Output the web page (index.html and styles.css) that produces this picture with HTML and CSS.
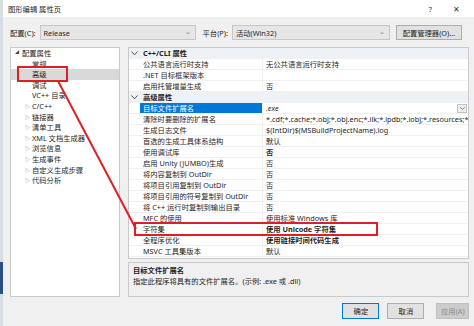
FILE: index.html
```html
<!DOCTYPE html>
<html lang="zh-CN">
<head>
<meta charset="UTF-8">
<title>图形编辑 属性页</title>
<link rel="stylesheet" href="styles.css">
</head>
<body>
<div class="desk">
  <div class="edge edge-left"></div>
  <div class="dialog">
    <div class="titlebar">
      <span class="title">图形编辑 属性页</span>
      <span class="title-btn">?</span>
      <span class="title-btn close">✕</span>
    </div>
    <div class="client">
      <div class="config-row">
        <span class="label">配置(C):</span>
        <div class="combo combo-config"><span>Release</span><span class="caret">⌄</span></div>
        <span class="label">平台(P):</span>
        <div class="combo combo-platform"><span>活动(Win32)</span><span class="caret">⌄</span></div>
        <div class="btn btn-manager">配置管理器(O)...</div>
      </div>

      <div class="main">
        <div class="tree">
          <div class="node root"><span class="exp">◢</span>配置属性</div>
          <div class="node child">常规</div>
          <div class="node child selected">高级</div>
          <div class="node child">调试</div>
          <div class="node child">VC++ 目录</div>
          <div class="node child"><span class="arr">▷</span>C/C++</div>
          <div class="node child"><span class="arr">▷</span>链接器</div>
          <div class="node child"><span class="arr">▷</span>清单工具</div>
          <div class="node child"><span class="arr">▷</span>XML 文档生成器</div>
          <div class="node child"><span class="arr">▷</span>浏览信息</div>
          <div class="node child"><span class="arr">▷</span>生成事件</div>
          <div class="node child"><span class="arr">▷</span>自定义生成步骤</div>
          <div class="node child"><span class="arr">▷</span>代码分析</div>
        </div>

        <div class="right">
          <div class="grid">
            <div class="row cat"><span class="gutter"><svg width="7" height="5" viewBox="0 0 7 5"><path d="M0.5 0.5 L3.5 3.8 L6.5 0.5" fill="none" stroke="#555" stroke-width="1"/></svg></span><span class="name">C++/CLI 属性</span></div>
            <div class="row"><span class="gutter"></span><span class="name">公共语言运行时支持</span><span class="val">无公共语言运行时支持</span></div>
            <div class="row"><span class="gutter"></span><span class="name">.NET 目标框架版本</span><span class="val"></span></div>
            <div class="row"><span class="gutter"></span><span class="name">启用托管增量生成</span><span class="val">否</span></div>
            <div class="row cat"><span class="gutter"><svg width="7" height="5" viewBox="0 0 7 5"><path d="M0.5 0.5 L3.5 3.8 L6.5 0.5" fill="none" stroke="#555" stroke-width="1"/></svg></span><span class="name">高级属性</span></div>
            <div class="row sel"><span class="gutter"></span><span class="name">目标文件扩展名</span><span class="val"><i>.exe</i><span class="drop"><svg width="5" height="3" viewBox="0 0 5 3"><path d="M0.3 0.3 L2.5 2.5 L4.7 0.3" fill="none" stroke="#666" stroke-width="0.8"/></svg></span></span></div>
            <div class="row"><span class="gutter"></span><span class="name">清除时要删除的扩展名</span><span class="val">*.cdf;*.cache;*.obj;*.obj.enc;*.ilk;*.ipdb;*.iobj;*.resources;*</span></div>
            <div class="row"><span class="gutter"></span><span class="name">生成日志文件</span><span class="val">$(IntDir)$(MSBuildProjectName).log</span></div>
            <div class="row"><span class="gutter"></span><span class="name">首选的生成工具体系结构</span><span class="val">默认</span></div>
            <div class="row"><span class="gutter"></span><span class="name">使用调试库</span><span class="val"><b>否</b></span></div>
            <div class="row"><span class="gutter"></span><span class="name">启用 Unity (JUMBO)生成</span><span class="val">否</span></div>
            <div class="row"><span class="gutter"></span><span class="name">将内容复制到 OutDir</span><span class="val">否</span></div>
            <div class="row"><span class="gutter"></span><span class="name">将项目引用复制到 OutDir</span><span class="val">否</span></div>
            <div class="row"><span class="gutter"></span><span class="name">将项目引用的符号复制到 OutDir</span><span class="val">否</span></div>
            <div class="row"><span class="gutter"></span><span class="name">将 C++ 运行时复制到输出目录</span><span class="val">否</span></div>
            <div class="row"><span class="gutter"></span><span class="name">MFC 的使用</span><span class="val">使用标准 Windows 库</span></div>
            <div class="row"><span class="gutter"></span><span class="name">字符集</span><span class="val"><b>使用 Unicode 字符集</b></span></div>
            <div class="row"><span class="gutter"></span><span class="name">全程序优化</span><span class="val"><b>使用链接时间代码生成</b></span></div>
            <div class="row"><span class="gutter"></span><span class="name">MSVC 工具集版本</span><span class="val">默认</span></div>
          </div>
          <div class="desc">
            <div class="desc-title">目标文件扩展名</div>
            <div class="desc-text">指定此程序将具有的文件扩展名。(示例: .exe 或 .dll)</div>
          </div>
        </div>
      </div>

      <div class="buttons">
        <div class="btn btn-ok">确定</div>
        <div class="btn btn-cancel">取消</div>
        <div class="btn btn-disabled">应用(A)</div>
      </div>
    </div>
  </div>
  <div class="edge edge-right"></div>
</div>

<!-- red markup drawn over the screenshot -->
<svg class="annot" width="474" height="326" viewBox="0 0 474 326">
  <rect x="18" y="67" width="49" height="14" fill="none" stroke="#dd1f26" stroke-width="2"/>
  <line x1="58" y1="81" x2="136" y2="229" stroke="#dd1f26" stroke-width="2"/>
  <rect x="135" y="223" width="242" height="12" fill="none" stroke="#dd1f26" stroke-width="2"/>
</svg>
</body>
</html>
```
FILE: styles.css
```css
body {
  margin: 0;
  width: 474px;
  height: 326px;
  overflow: hidden;
  font-family: "Noto Sans", "Noto Sans CJK SC", sans-serif;
  font-size: 7.3px;
  color: #1e1e1e;
  background-color: #f0f0f0;
}
.desk {
  display: flex;
  height: 326px;
}
.edge {
  flex: none;
}
.edge-left {
  width: 3px;
  background: linear-gradient(#d7dde3 0, #d7dde3 262px, #2c4f80 262px, #2c4f80 294px, #d7dde3 294px);
}
.edge-right {
  width: 4px;
  background: linear-gradient(#e9e9e9 0, #e9e9e9 278px, #2c4f80 278px, #2c4f80 297px, #e9e9e9 297px);
}
.dialog {
  flex: 1;
  display: flex;
  flex-direction: column;
  background-color: #f0f0f0;
}
.titlebar {
  height: 17px;
  background-color: #ffffff;
  display: flex;
  align-items: center;
  padding-left: 5px;
  padding-right: 5px;
}
.title {
  flex: 1;
}
.title-btn {
  width: 26px;
  text-align: center;
  color: #333;
}
.title-btn.close {
  font-size: 8px;
}
.client {
  flex: 1;
  display: flex;
  flex-direction: column;
  padding: 8px 5px 0 7px;
}
.config-row {
  display: flex;
  align-items: center;
  height: 15px;
}
.label {
  margin-right: 4px;
}
.combo {
  height: 13px;
  border: 1px solid #c6c6c6;
  background-color: #e6e6e6;
  display: flex;
  align-items: center;
  justify-content: space-between;
  padding: 0 4px 0 3px;
  box-sizing: content-box;
}
.combo-config {
  width: 147px;
  margin-right: 7px;
}
.combo-platform {
  width: 149px;
  margin-right: 6px;
}
.caret {
  color: #777;
  font-size: 7px;
  line-height: 7px;
  margin-top: -3px;
}
.btn {
  height: 14px;
  border: 1px solid #adadad;
  background-color: #e1e1e1;
  display: flex;
  align-items: center;
  justify-content: center;
  box-sizing: border-box;
}
.btn-manager {
  width: 66px;
  height: 15px;
}
.main {
  display: flex;
  margin-top: 7px;
  height: 250px;
}
.tree {
  width: 110px;
  box-sizing: border-box;
  border: 1px solid #c9c9c9;
  background-color: #ffffff;
  padding-top: 0;
}
.node {
  height: 10.6px;
  line-height: 10.6px;
  white-space: nowrap;
  display: flex;
  align-items: center;
  color: #262626;
}
.node.root {
  padding-left: 4px;
}
.exp {
  font-size: 4px;
  width: 7px;
  color: #444;
}
.node.child {
  padding-left: 21px;
}
.node.selected {
  background-color: #d9d9d9;
}
.arr {
  font-size: 5px;
  color: #666;
  margin-left: -7px;
  width: 7px;
}
.right {
  margin-left: 8px;
  flex: 1;
  display: flex;
  flex-direction: column;
}
.grid {
  height: 212px;
  box-sizing: border-box;
  border: 1px solid #c9c9c9;
  background-color: #ffffff;
  overflow: hidden;
}
.row {
  height: 11px;
  display: flex;
  align-items: stretch;
  box-sizing: border-box;
  border-bottom: 1px solid #f0f0f0;
  white-space: nowrap;
}
.gutter {
  width: 11px;
  flex: none;
  display: flex;
  align-items: center;
  justify-content: center;
}
.name {
  width: 123px;
  flex: none;
  padding-left: 3px;
  box-sizing: border-box;
  border-right: 1px solid #f0f0f0;
  line-height: 10px;
  overflow: hidden;
}
.val {
  flex: 1;
  padding-left: 3px;
  line-height: 10px;
  overflow: hidden;
  display: flex;
  align-items: center;
}
.row.cat {
  background-color: #eef2f7;
}
.row.cat .name {
  font-weight: bold;
  border-right: none;
}
.row.sel .name {
  background-color: #0078d7;
  color: #ffffff;
}
.row.sel .val i {
  flex: 1;
}
.drop {
  width: 8px;
  height: 7px;
  border: 1px solid #c2c2c2;
  background-color: #eeeeee;
  display: flex;
  align-items: center;
  justify-content: center;
  margin-right: 1px;
}
.desc {
  margin-top: 3px;
  height: 35px;
  box-sizing: border-box;
  border: 1px solid #c9c9c9;
  padding: 2px 4px;
}
.desc-title {
  font-weight: bold;
  line-height: 11px;
}
.desc-text {
  line-height: 11px;
}
.buttons {
  display: flex;
  justify-content: flex-end;
  margin-top: 6px;
}
.buttons .btn {
  width: 37px;
  height: 16px;
}
.btn-ok {
  border-color: #0078d7;
  margin-right: 8px;
}
.btn-cancel {
  margin-right: 12px;
}
.buttons .btn-disabled {
  background-color: #cccccc;
  border-color: #bfbfbf;
  color: #8a8a8a;
  width: 33px;
}
.annot {
  position: absolute;
  left: 0;
  top: 0;
  pointer-events: none;
}
```
